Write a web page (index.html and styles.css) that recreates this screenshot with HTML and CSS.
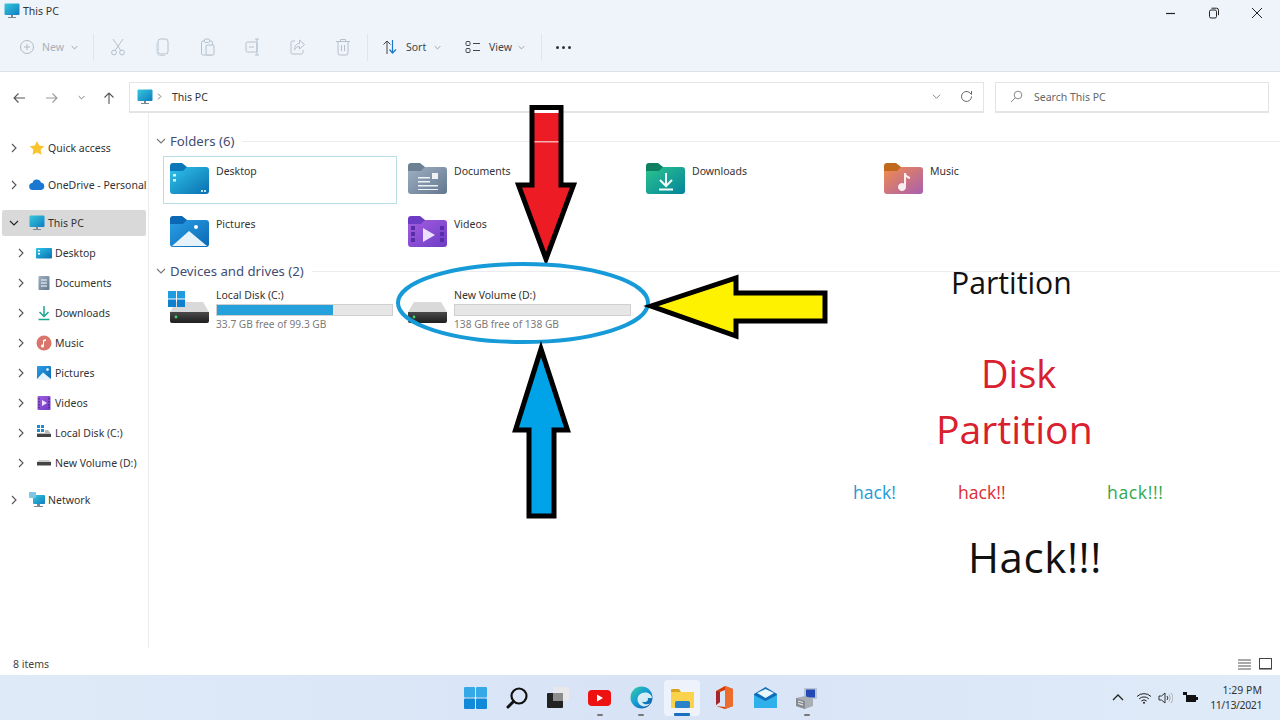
FILE: index.html
```html
<!DOCTYPE html>
<html lang="en">
<head>
  <meta charset="UTF-8" />
  <title>This PC</title>
  <link rel="stylesheet" href="styles.css">
</head>
<body>

<svg class="defs" width="0" height="0">
  <defs>
    <linearGradient id="gBlue" x1="0" y1="0" x2="1" y2="1"><stop offset="0" stop-color="#2fc4ea"/><stop offset="1" stop-color="#0a6fb0"/></linearGradient>
    <linearGradient id="gGrey" x1="0" y1="0" x2="1" y2="1"><stop offset="0" stop-color="#9fb0c2"/><stop offset="1" stop-color="#62778f"/></linearGradient>
    <linearGradient id="gGreen" x1="0" y1="0" x2="1" y2="1"><stop offset="0" stop-color="#2bc48e"/><stop offset="1" stop-color="#04849c"/></linearGradient>
    <linearGradient id="gMusic" x1="0" y1="0" x2="1" y2="1"><stop offset="0" stop-color="#f28c4c"/><stop offset="1" stop-color="#a85fb0"/></linearGradient>
    <linearGradient id="gPic" x1="0" y1="0" x2="1" y2="1"><stop offset="0" stop-color="#2a9fe6"/><stop offset="1" stop-color="#0b68b4"/></linearGradient>
    <linearGradient id="gVid" x1="0" y1="0" x2="1" y2="1"><stop offset="0" stop-color="#a45ee0"/><stop offset="1" stop-color="#6d3cc4"/></linearGradient>
    <linearGradient id="gDrive" x1="0" y1="0" x2="0" y2="1"><stop offset="0" stop-color="#4a4a4a"/><stop offset="1" stop-color="#1e1e1e"/></linearGradient>
    <linearGradient id="gScreen" x1="0" y1="0" x2="1" y2="1"><stop offset="0" stop-color="#35c8dc"/><stop offset="1" stop-color="#0f7cc0"/></linearGradient>
    <linearGradient id="gEdge" x1="0" y1="0" x2="1" y2="1"><stop offset="0" stop-color="#35d0a0"/><stop offset="0.5" stop-color="#1499d8"/><stop offset="1" stop-color="#0a4fa0"/></linearGradient>

    <symbol id="monitor" viewBox="0 0 16 16">
      <rect x="0.5" y="0.5" width="15" height="11.5" rx="1" fill="url(#gScreen)"/>
      <rect x="7" y="12" width="2" height="2" fill="#7a8894"/>
      <rect x="4" y="14" width="8" height="1" fill="#7a8894"/>
    </symbol>
    <symbol id="folderTab" viewBox="0 0 39 31">
      <path d="M0 3a3 3 0 0 1 3-3h9l5 4v6H0z" fill="currentColor"/>
    </symbol>
    <symbol id="drive" viewBox="0 0 39 21">
      <path d="M6 0h27l6 10H0z" fill="#d9d9d9"/>
      <path d="M0 10h39v9a2 2 0 0 1-2 2H2a2 2 0 0 1-2-2z" fill="url(#gDrive)"/>
      <circle cx="6" cy="15" r="1.4" fill="#3fd46a"/>
    </symbol>
    <symbol id="chevR" viewBox="0 0 10 10">
      <path d="M3 1l4 4-4 4" fill="none" stroke="#555" stroke-width="1.1"/>
    </symbol>
    <symbol id="chevD" viewBox="0 0 10 10">
      <path d="M1 3l4 4 4-4" fill="none" stroke="currentColor" stroke-width="1.1"/>
    </symbol>
  </defs>
</svg>

<header class="chrome">
  <div class="titlebar">
    <div class="title-left">
      <svg class="ico16" width="16" height="16"><use href="#monitor"/></svg>
      <span>This PC</span>
    </div>
    <div class="win-btns">
      <svg width="12" height="12" viewBox="0 0 12 12"><path d="M1 6.5h9" stroke="#222" stroke-width="1.2"/></svg>
      <svg width="12" height="12" viewBox="0 0 12 12"><rect x="1.5" y="3" width="7" height="8" rx="1.5" fill="none" stroke="#222"/><path d="M3.5 1.2h5a2 2 0 0 1 2 2v5" fill="none" stroke="#222"/></svg>
      <svg width="12" height="12" viewBox="0 0 12 12"><path d="M1 1l10 10M11 1L1 11" stroke="#222" stroke-width="1"/></svg>
    </div>
  </div>
  <div class="toolbar">
    <div class="tool tool-new dim">
      <svg width="16" height="16" viewBox="0 0 16 16"><circle cx="8" cy="8" r="6.5" fill="none" stroke="#b4bac2"/><path d="M8 5v6M5 8h6" stroke="#b4bac2"/></svg>
      <span>New</span>
      <svg class="chev-s" width="7" height="7"><use href="#chevD"/></svg>
    </div>
    <i class="tool-sep sep-a"></i>
    <div class="tool-icons">
      <svg width="16" height="18" viewBox="0 0 16 18"><path d="M3 1l7.5 11M13 1L5.5 12" fill="none" stroke="#b4c0cc"/><circle cx="4" cy="14.5" r="2.4" fill="none" stroke="#b4c0cc"/><circle cx="12" cy="14.5" r="2.4" fill="none" stroke="#b4c0cc"/></svg>
      <svg width="16" height="18" viewBox="0 0 16 18"><rect x="3" y="1" width="10" height="15" rx="2.5" fill="none" stroke="#b4c0cc"/><path d="M2 5v10a2.500 2.500 0 0 0 2.500 2.500H10" fill="none" stroke="#cdd5dc"/></svg>
      <svg width="16" height="18" viewBox="0 0 16 18"><rect x="1.500" y="3" width="11" height="14" rx="1.500" fill="none" stroke="#b4c0cc"/><rect x="6" y="7" width="8" height="10" rx="1" fill="#eef3fa" stroke="#b4c0cc"/><rect x="4.500" y="1" width="5" height="3.500" rx="1" fill="#eef3fa" stroke="#b4c0cc"/></svg>
      <svg width="16" height="18" viewBox="0 0 16 18"><rect x="1" y="4" width="11" height="10" rx="1.500" fill="none" stroke="#b4c0cc"/><path d="M4 9h5M12 1v16M10 1h4M10 17h4" fill="none" stroke="#b4c0cc"/></svg>
      <svg width="16" height="18" viewBox="0 0 16 18"><path d="M5 3H2.500A1.500 1.500 0 0 0 1 4.500v10A1.500 1.500 0 0 0 2.500 16h9a1.500 1.500 0 0 0 1.500-1.500V12" fill="none" stroke="#b4c0cc"/><path d="M9.500 2l5 4.500-5 4.500V8.500C7 8.500 5.500 10 4.500 12c0-4 2-6.500 5-6.500z" fill="none" stroke="#b4c0cc"/></svg>
      <svg width="16" height="18" viewBox="0 0 16 18"><path d="M1 3.500h14M5.500 3.500V1.500h5v2M3 3.500V15a2 2 0 0 0 2 2h6a2 2 0 0 0 2-2V3.500M6.500 7v6M9.500 7v6" fill="none" stroke="#b4c0cc"/></svg>
    </div>
    <i class="tool-sep sep-b"></i>
    <div class="tool tool-sort">
      <svg width="16" height="16" viewBox="0 0 16 16"><path d="M5 15V2M1.500 5.500L5 2l3.500 3.500" fill="none" stroke="#444"/><path d="M10.500 1v13M7.500 10.500l3 3.500 3.500-3.500" fill="none" stroke="#1a78c8" stroke-width="1.200"/></svg>
      <span>Sort</span>
      <svg class="chev-s" width="7" height="7"><use href="#chevD"/></svg>
    </div>
    <div class="tool tool-view">
      <svg width="16" height="14" viewBox="0 0 16 14"><rect x="1" y="1.500" width="4" height="4" rx="1" fill="none" stroke="#444"/><rect x="1" y="8.500" width="4" height="4" rx="1" fill="none" stroke="#444"/><path d="M8 3.500h7M8 10.500h7" stroke="#444"/></svg>
      <span>View</span>
      <svg class="chev-s" width="7" height="7"><use href="#chevD"/></svg>
    </div>
    <i class="tool-sep sep-c"></i>
    <div class="tool-more"><b></b><b></b><b></b></div>
  </div>
</header>

<div class="addressrow">
  <div class="nav-btns">
    <svg width="14" height="12" viewBox="0 0 14 12"><path d="M13 6H2M6.500 1.500L2 6l4.500 4.500" fill="none" stroke="#555" stroke-width="1.100"/></svg>
    <svg width="14" height="12" viewBox="0 0 14 12"><path d="M1 6h11M7.500 1.500L12 6l-4.500 4.500" fill="none" stroke="#9a9a9a" stroke-width="1.100"/></svg>
    <svg class="nav-down" width="7" height="7"><use href="#chevD"/></svg>
    <svg width="12" height="14" viewBox="0 0 12 14"><path d="M6 13V2M1.500 6.500L6 2l4.500 4.500" fill="none" stroke="#555" stroke-width="1.100"/></svg>
  </div>
  <div class="addressbox">
    <svg width="16" height="16"><use href="#monitor"/></svg>
    <svg class="addr-sep" width="7" height="7"><use href="#chevR"/></svg>
    <span class="addr-text">This PC</span>
    <svg class="addr-drop" width="9" height="9"><use href="#chevD"/></svg>
    <svg class="addr-refresh" width="13" height="13" viewBox="0 0 13 13"><path d="M11.500 6.500a5 5 0 1 1-1.500-3.600L11.500 4.500V1" fill="none" stroke="#666"/></svg>
  </div>
  <div class="searchbox">
    <svg width="13" height="13" viewBox="0 0 13 13"><circle cx="8" cy="5" r="3.800" fill="none" stroke="#888"/><path d="M5.200 7.800L1 12" stroke="#888"/></svg>
    <span>Search This PC</span>
  </div>
</div>

<div class="main">
  <nav class="sidebar">
    <div class="tree-row top r-quick">
      <svg class="tw" width="10" height="10"><use href="#chevR"/></svg>
      <svg width="16" height="16" viewBox="0 0 16 16"><path d="M8 1l2.200 4.600 5 .7-3.600 3.500.9 5L8 12.400 3.500 14.800l.9-5L.8 6.300l5-.7z" fill="#f8c32c"/></svg>
      <span>Quick access</span>
    </div>
    <div class="tree-row top r-one">
      <svg class="tw" width="10" height="10"><use href="#chevR"/></svg>
      <svg width="16" height="16" viewBox="0 0 16 16"><path d="M4 13a3.500 3.500 0 0 1-.6-7A4.500 4.500 0 0 1 12 5.500 3.800 3.800 0 0 1 12.200 13z" fill="#1a78d0"/></svg>
      <span>OneDrive - Personal</span>
    </div>
    <div class="tree-row top selected">
      <svg class="tw tw-open" width="10" height="10"><use href="#chevD"/></svg>
      <svg width="16" height="16"><use href="#monitor"/></svg>
      <span>This PC</span>
    </div>
    <div class="tree-row sub">
      <svg class="tw" width="10" height="10"><use href="#chevR"/></svg>
      <svg width="16" height="16" viewBox="0 0 16 16"><rect y="3" width="16" height="10.500" rx="1" fill="url(#gBlue)"/><rect x="2" y="5" width="2" height="1.500" fill="#fff"/><rect x="2" y="8" width="2" height="1.500" fill="#fff"/></svg>
      <span>Desktop</span>
    </div>
    <div class="tree-row sub">
      <svg class="tw" width="10" height="10"><use href="#chevR"/></svg>
      <svg width="16" height="16" viewBox="0 0 16 16"><rect x="2.500" y="1" width="11" height="14" rx="1" fill="url(#gGrey)"/><path d="M5 5h6M5 8h6M5 11h6" stroke="#fff"/></svg>
      <span>Documents</span>
    </div>
    <div class="tree-row sub">
      <svg class="tw" width="10" height="10"><use href="#chevR"/></svg>
      <svg width="16" height="16" viewBox="0 0 16 16"><path d="M8 1v10M3.500 7L8 11.500 12.500 7M2.500 14.500h11" fill="none" stroke="#1ba88c" stroke-width="1.500"/></svg>
      <span>Downloads</span>
    </div>
    <div class="tree-row sub">
      <svg class="tw" width="10" height="10"><use href="#chevR"/></svg>
      <svg width="16" height="16" viewBox="0 0 16 16"><circle cx="8" cy="8" r="7.500" fill="#d9756a"/><path d="M7 11V5l3-1v2l-2 .6V11a1.500 1.500 0 1 1-1-1.400z" fill="#fff"/></svg>
      <span>Music</span>
    </div>
    <div class="tree-row sub">
      <svg class="tw" width="10" height="10"><use href="#chevR"/></svg>
      <svg width="16" height="16" viewBox="0 0 16 16"><rect x="1" y="1" width="14" height="14" rx="1" fill="url(#gPic)"/><path d="M1 14l6-6.500L15 14v1H1z" fill="#e8f4fc"/><circle cx="11.500" cy="4.500" r="1.300" fill="#fff"/></svg>
      <span>Pictures</span>
    </div>
    <div class="tree-row sub">
      <svg class="tw" width="10" height="10"><use href="#chevR"/></svg>
      <svg width="16" height="16" viewBox="0 0 16 16"><rect x="1.500" y="1" width="13" height="14" rx="1" fill="url(#gVid)"/><path d="M6 5v6l5-3z" fill="#f0e4ff"/><path d="M3 3v1.500M3 6v1.500M3 9v1.500M3 12v1M13 3v1.500M13 6v1.500M13 9v1.500M13 12v1" stroke="#3c1d7c" stroke-width="1.200"/></svg>
      <span>Videos</span>
    </div>
    <div class="tree-row sub">
      <svg class="tw" width="10" height="10"><use href="#chevR"/></svg>
      <svg width="16" height="16" viewBox="0 0 16 16"><rect x="1" y="0" width="3" height="3" fill="#1d8bd0"/><rect x="5" y="0" width="3" height="3" fill="#1d8bd0"/><rect x="1" y="4" width="3" height="3" fill="#1d8bd0"/><rect x="5" y="4" width="3" height="3" fill="#1d8bd0"/><path d="M9 5h3l3 4v3H1V8h8z" fill="#bbb"/><rect x="1" y="9" width="14" height="3" fill="#444"/></svg>
      <span>Local Disk (C:)</span>
    </div>
    <div class="tree-row sub">
      <svg class="tw" width="10" height="10"><use href="#chevR"/></svg>
      <svg width="16" height="16" viewBox="0 0 16 16"><path d="M3 5h10l2 2H1z" fill="#ccc"/><rect x="1" y="7" width="14" height="3.500" fill="#444"/></svg>
      <span>New Volume (D:)</span>
    </div>
    <div class="tree-row top r-net">
      <svg class="tw" width="10" height="10"><use href="#chevR"/></svg>
      <svg width="16" height="16" viewBox="0 0 16 16"><rect x="4" y="3" width="12" height="9" rx="1" fill="url(#gScreen)"/><rect x="0" y="0" width="7" height="6" rx="1" fill="#7fc6e0"/><rect x="8" y="12" width="3" height="2" fill="#7a8894"/><rect x="5" y="14" width="9" height="1" fill="#7a8894"/></svg>
      <span>Network</span>
    </div>
  </nav>

  <section class="content">
    <div class="group-head head-folders">
      <svg width="10" height="10"><use href="#chevD"/></svg>
      <span>Folders (6)</span>
      <i></i>
    </div>
    <div class="tiles">
      <div class="tile focused">
        <svg class="folder" width="39" height="31" viewBox="0 0 39 31" style="color:#0b76b8">
          <use href="#folderTab"/>
          <path d="M0 8h13l4-4h19a3 3 0 0 1 3 3v21a3 3 0 0 1-3 3H3a3 3 0 0 1-3-3z" fill="url(#gBlue)"/>
          <rect x="3" y="11" width="3" height="2.500" fill="#d8f4fb"/><rect x="3" y="16" width="3" height="2.500" fill="#d8f4fb"/>
          <rect x="31" y="27" width="2" height="2" fill="#bfe6f4"/><rect x="34" y="27" width="2" height="2" fill="#bfe6f4"/>
        </svg>
        <span class="tile-name">Desktop</span>
      </div>
      <div class="tile">
        <svg class="folder" width="39" height="31" viewBox="0 0 39 31" style="color:#6d8194">
          <use href="#folderTab"/>
          <path d="M0 8h13l4-4h19a3 3 0 0 1 3 3v21a3 3 0 0 1-3 3H3a3 3 0 0 1-3-3z" fill="url(#gGrey)"/>
          <path d="M10 14h12v1.500H10zM10 18h12v1.500H10zM10 22h20v1.500H10zM10 26h20v1H10z" fill="#eef2f6"/><rect x="24" y="10" width="6" height="6" fill="#eef2f6"/>
        </svg>
        <span class="tile-name">Documents</span>
      </div>
      <div class="tile">
        <svg class="folder" width="39" height="31" viewBox="0 0 39 31" style="color:#0f7f62">
          <use href="#folderTab"/>
          <path d="M0 8h13l4-4h19a3 3 0 0 1 3 3v21a3 3 0 0 1-3 3H3a3 3 0 0 1-3-3z" fill="url(#gGreen)"/>
          <path d="M20 10v12M14 17l6 6 6-6M13 26.500h14" fill="none" stroke="#f2fbf8" stroke-width="2"/>
        </svg>
        <span class="tile-name">Downloads</span>
      </div>
      <div class="tile">
        <svg class="folder" width="39" height="31" viewBox="0 0 39 31" style="color:#c0681c">
          <use href="#folderTab"/>
          <path d="M0 8h13l4-4h19a3 3 0 0 1 3 3v21a3 3 0 0 1-3 3H3a3 3 0 0 1-3-3z" fill="url(#gMusic)"/>
          <path d="M20 10h2c0 3 3 3 4 4v2c-1 0-3-1-4-2v10a4 4 0 1 1-2-3.400z" fill="#fbeef0"/>
        </svg>
        <span class="tile-name">Music</span>
      </div>
      <div class="tile">
        <svg class="folder" width="39" height="31" viewBox="0 0 39 31" style="color:#0b68b4">
          <use href="#folderTab"/>
          <path d="M0 8h13l4-4h19a3 3 0 0 1 3 3v21a3 3 0 0 1-3 3H3a3 3 0 0 1-3-3z" fill="url(#gPic)"/>
          <path d="M2 30l17-15 18 15z" fill="#e6f2fa"/><circle cx="26" cy="11" r="2" fill="#fff"/>
        </svg>
        <span class="tile-name">Pictures</span>
      </div>
      <div class="tile">
        <svg class="folder" width="39" height="31" viewBox="0 0 39 31" style="color:#6d3cc4">
          <use href="#folderTab"/>
          <path d="M0 8h13l4-4h19a3 3 0 0 1 3 3v21a3 3 0 0 1-3 3H3a3 3 0 0 1-3-3z" fill="url(#gVid)"/>
          <path d="M15 12v14l12-7z" fill="#ece0ff"/>
          <path d="M3 10h4v4H3zM3 16h4v4H3zM3 22h4v4H3zM32 10h4v4h-4zM32 16h4v4h-4zM32 22h4v4h-4z" fill="#5a2da8"/>
        </svg>
        <span class="tile-name">Videos</span>
      </div>
    </div>

    <div class="group-head head-drives">
      <svg width="10" height="10"><use href="#chevD"/></svg>
      <span>Devices and drives (2)</span>
      <i></i>
    </div>
    <div class="drives">
      <div class="drive">
        <div class="drive-ico">
          <svg class="win-logo" width="17" height="16" viewBox="0 0 17 16"><rect width="8" height="7.500" fill="#1f9be0"/><rect x="9" width="8" height="7.500" fill="#1f9be0"/><rect y="8.500" width="8" height="7.500" fill="#0f7fd0"/><rect x="9" y="8.500" width="8" height="7.500" fill="#0f7fd0"/></svg>
          <svg width="39" height="21"><use href="#drive"/></svg>
        </div>
        <div class="drive-info">
          <span class="drive-name">Local Disk (C:)</span>
          <div class="bar"><div class="bar-fill" style="width:66%"></div></div>
          <span class="drive-free">33.7 GB free of 99.3 GB</span>
        </div>
      </div>
      <div class="drive">
        <div class="drive-ico">
          <svg width="39" height="21"><use href="#drive"/></svg>
        </div>
        <div class="drive-info">
          <span class="drive-name">New Volume (D:)</span>
          <div class="bar"></div>
          <span class="drive-free">138 GB free of 138 GB</span>
        </div>
      </div>
    </div>
  </section>
</div>

<div class="statusbar">
  <span>8 items</span>
  <div class="status-views">
    <svg width="13" height="11" viewBox="0 0 13 11"><path d="M0 1h13M0 4h13M0 7h13M0 10h13" stroke="#555"/></svg>
    <svg width="13" height="12" viewBox="0 0 13 12"><rect x="0.500" y="0.500" width="12" height="10" fill="none" stroke="#444"/><path d="M0 11.500h13" stroke="#999"/></svg>
  </div>
</div>

<footer class="taskbar">
  <div class="task-icons">
    <div class="task-app">
      <svg width="23" height="22" viewBox="0 0 23 22"><rect width="11" height="10.500" rx="1" fill="#35a8e8"/><rect x="12" width="11" height="10.500" rx="1" fill="#35a8e8"/><rect y="11.500" width="11" height="10.500" rx="1" fill="#1188d8"/><rect x="12" y="11.500" width="11" height="10.500" rx="1" fill="#1188d8"/></svg>
    </div>
    <div class="task-app">
      <svg width="22" height="22" viewBox="0 0 22 22"><circle cx="13" cy="9" r="7.500" fill="none" stroke="#111" stroke-width="2.200"/><path d="M7.500 14.500L2 20" stroke="#111" stroke-width="3" stroke-linecap="round"/></svg>
    </div>
    <div class="task-app">
      <svg width="22" height="21" viewBox="0 0 22 21"><rect x="6" y="0" width="16" height="14" rx="1" fill="#e8e8ea"/><rect y="6" width="16" height="15" rx="1" fill="#222"/><rect x="6" y="6" width="10" height="8" fill="#8d8d8f"/></svg>
    </div>
    <div class="task-app running">
      <svg width="23" height="16" viewBox="0 0 23 16"><rect width="23" height="16" rx="4" fill="#ee1111"/><path d="M9 4.500v7l6-3.500z" fill="#fff"/></svg>
    </div>
    <div class="task-app running">
      <svg width="23" height="23" viewBox="0 0 23 23"><circle cx="11.500" cy="11.500" r="11" fill="url(#gEdge)"/><path d="M22 12c0-3-3-5.500-6.500-5.500-5 0-8 3-8 7 0 3 2 6 6 7 2 .3 5-1 6.500-3-3 1.500-7 1-8-2 2 1 5 .5 5.500-1 1-1 .5-2 0-2.500h4.500z" fill="#eaf6fb" opacity="0.9"/></svg>
    </div>
    <div class="task-app active">
      <svg width="23" height="20" viewBox="0 0 23 20"><path d="M0 2a1 1 0 0 1 1-1h7l2 3h12a1 1 0 0 1 1 1v3H0z" fill="#d9a520"/><path d="M0 4h23v15a1 1 0 0 1-1 1H1a1 1 0 0 1-1-1z" fill="#fbd24c"/><rect x="4" y="13" width="15" height="7" rx="1.500" fill="#2a82c8"/></svg>
    </div>
    <div class="task-app">
      <svg width="19" height="23" viewBox="0 0 19 23"><path d="M11 0l8 3v17l-8 3-9-3 9 1V4L6 6v10l-4 3V5z" fill="#d83b01"/><path d="M11 0l8 3v17l-8 3z" fill="#eb6c2c"/><path d="M2 5l4 1v10l-4 3z" fill="#a4262c"/></svg>
    </div>
    <div class="task-app">
      <svg width="23" height="21" viewBox="0 0 23 21"><path d="M0 7L11.500 0 23 7v14H0z" fill="#0f6cb8"/><path d="M3 6l8.500-4L20 6l-8.500 5z" fill="#e8f6fd"/><path d="M0 8l11.500 6L23 8v13H0z" fill="#2fb0ea"/></svg>
    </div>
    <div class="task-app running">
      <svg width="23" height="22" viewBox="0 0 23 22"><rect x="9" y="1" width="13" height="11" fill="#b8c4d2"/><rect x="11" y="2.500" width="9" height="8" fill="#2448b4"/><path d="M1 11l9-2 8 3v7l-8 3-9-3z" fill="#a8aeb4"/><path d="M1 11l9 3v8l-9-3z" fill="#878c92"/><path d="M3 14l5 1.500M3 16.500l5 1.500" stroke="#eee"/></svg>
    </div>
  </div>
  <div class="tray">
    <svg class="tray-up" width="12" height="7" viewBox="0 0 12 7"><path d="M1 6l5-5 5 5" fill="none" stroke="#222" stroke-width="1.300"/></svg>
    <svg class="tray-wifi" width="16" height="12" viewBox="0 0 16 12"><path d="M1 4.500a10 10 0 0 1 14 0M3.200 6.800a7 7 0 0 1 9.600 0M5.300 9a4 4 0 0 1 5.400 0" fill="none" stroke="#222"/><circle cx="8" cy="10.800" r="1" fill="#222"/></svg>
    <svg class="tray-vol" width="15" height="12" viewBox="0 0 15 12"><path d="M1 4h2.500L7 1v10L3.500 8H1z" fill="none" stroke="#333"/><path d="M9 4a3 3 0 0 1 0 4" fill="none" stroke="#333"/><path d="M11 2.500a6 6 0 0 1 0 7M13 1a8 8 0 0 1 0 10" fill="none" stroke="#aaa"/></svg>
    <svg class="tray-bat" width="15" height="12" viewBox="0 0 15 12"><rect x="3" y="3" width="10" height="7" fill="#111"/><rect x="13" y="5" width="2" height="3" fill="#111"/><rect x="0" y="0" width="4" height="3" fill="#111"/></svg>
    <div class="clock">
      <span>1:29 PM</span>
      <span class="clock-date">11/13/2021</span>
    </div>
  </div>
</footer>

<!-- annotations drawn over the window -->
<svg class="marks" width="1280" height="720" viewBox="0 0 1280 720">
  <path d="M532 107.500H561V185H573.500L546 259 518.500 185H532z" fill="#ed1c24" stroke="#000" stroke-width="5"/>
  <rect x="534.500" y="110" width="24" height="3" fill="#fff"/>
  <rect x="534.500" y="141" width="24" height="1.500" fill="#f4b0b0"/>
  <ellipse cx="523" cy="303" rx="125" ry="39" fill="none" stroke="#169bd8" stroke-width="4"/>
  <path d="M651 306L736 278V293H825V321H736V336z" fill="#fff200" stroke="#000" stroke-width="5"/>
  <path d="M541 349L567.500 430H554V516H529V430H515.500z" fill="#00a2e8" stroke="#000" stroke-width="5"/>
</svg>

<div class="notes">
  <span class="note n-part">Partition</span>
  <span class="note n-disk">Disk</span>
  <span class="note n-part2">Partition</span>
  <span class="note n-h1">hack!</span>
  <span class="note n-h2">hack!!</span>
  <span class="note n-h3">hack!!!</span>
  <span class="note n-hack">Hack!!!</span>
</div>

</body>
</html>
```

FILE: styles.css
```css
* { box-sizing: border-box; }
html, body { margin: 0; padding: 0; }
body {
  width: 1280px;
  height: 720px;
  overflow: hidden;
  position: relative;
  display: flex;
  flex-direction: column;
  background: #fff;
  color: #333;
  font-family: "Noto Sans", "Open Sans", sans-serif;
  font-size: 10.5px;
}
svg { display: block; flex: none; }
.defs { position: absolute; }

/* title + command bar */
.chrome {
  height: 72px;
  background: #eff4fb;
  border-bottom: 1px solid #dde1e6;
}
.titlebar {
  height: 28px;
  display: flex;
  justify-content: space-between;
  align-items: center;
  padding: 0 17px 0 4px;
}
.title-left { display: flex; align-items: center; gap: 3px; margin-top: -6px; }
.win-btns { display: flex; gap: 31px; margin-top: -3px; }
.toolbar {
  height: 38px;
  display: flex;
  align-items: center;
  padding-left: 19px;
}
.tool { display: flex; align-items: center; gap: 6px; color: #444; }
.tool.dim { color: #a9afb6; }
.chev-s { color: #888; }
.tool-new { width: 74px; gap: 7px; }
.tool-sep { width: 1px; height: 27px; background: #e0e5ec; flex: none; }
.tool-icons { display: flex; gap: 29px; margin-left: 16px; width: 257px; }
.tool-sort { margin-left: 14px; width: 83px; gap: 8px; }
.tool-view { width: 76px; }
.tool-view span { margin-left: 2px; }
.tool-more { display: flex; gap: 3px; margin-left: 14px; }
.tool-more b { width: 3px; height: 3px; border-radius: 50%; background: #333; }

/* address row */
.addressrow {
  display: flex;
  align-items: center;
  height: 31px;
  margin-top: 10px;
}
.nav-btns { display: flex; align-items: center; width: 129px; padding-left: 12px; gap: 19px; }
.nav-down { color: #555; margin-right: -1px; }
.addressbox, .searchbox {
  height: 31px;
  display: flex;
  align-items: center;
  background: #fff;
  border: 1px solid #e4e4e4;
  border-bottom-width: 2px;
  padding-bottom: 1px;
}
.addressbox { width: 855px; padding-left: 7px; padding-right: 10px; }
.addr-sep { margin: 0 9px 0 3px; }
.addr-text { flex: 1; color: #333; }
.addr-drop { color: #888; margin-right: 19px; }
.searchbox { width: 274px; margin-left: 11px; padding-left: 14px; gap: 11px; color: #666; }

/* sidebar + content */
.main { flex: 1; display: flex; min-height: 0; }
.sidebar {
  width: 149px;
  border-right: 1px solid #ececec;
  padding-top: 20px;
  flex: none;
}
.tree-row { display: flex; align-items: center; height: 30px; white-space: nowrap; gap: 3px; }
.tree-row.top { padding-left: 9px; }
.tree-row.sub { padding-left: 16px; }
.tree-row .tw { margin-right: 7px; }
.r-one { margin-top: 7px; }
.selected {
  margin: 10px 2px 2px 2px;
  height: 26px;
  background: #d9d9d9;
  border-radius: 2px;
  padding-left: 7px !important;
  color: #333;
}
.tw-open { color: #222; }
.r-net { margin-top: 7px; }

.content { flex: 1; padding: 18px 0 0 14px; min-width: 0; }
.group-head {
  display: flex;
  align-items: center;
  gap: 4px;
  margin-left: -7px;
  height: 20px;
  color: #3f4d74;
  font-size: 13.2px;
}
.group-head svg { color: #777; }
.group-head i { flex: 1; height: 1px; background: #ececec; margin-left: 4px; }
.tiles {
  display: grid;
  grid-template-columns: repeat(4, 234px);
  column-gap: 4px;
  row-gap: 5px;
  margin: 5px 0 0 0;
}
.tile {
  height: 48px;
  display: flex;
  gap: 7px;
  padding: 6px 6px;
  border: 1px solid transparent;
}
.tile.focused { border-color: #b9dbe8; }
.tile-name { line-height: 15px; color: #333; margin-top: 1px; }
.head-drives { margin-top: 4px; }
.drives { display: flex; gap: 4px; margin: 7px 0 0 0; }
.drive { width: 234px; display: flex; gap: 7px; padding-left: 7px; height: 44px; }
.drive-ico {
  width: 39px;
  height: 35px;
  display: flex;
  flex-direction: column;
  justify-content: flex-end;
  position: relative;
  flex: none;
}
.win-logo { position: absolute; left: -2px; top: 3px; }
.drive-info { flex: 1; display: flex; flex-direction: column; padding-right: 4px; }
.drive-name { line-height: 13px; margin-top: 1px; color: #333; }
.bar {
  height: 12px;
  margin-top: 2px;
  background: #e6e6e6;
  border: 1px solid #cfcfcf;
}
.bar-fill { height: 100%; background: #26a0da; }
.drive-free { color: #7a7a7a; line-height: 13px; margin-top: 2px; font-size: 10.2px; }

.statusbar {
  height: 26px;
  display: flex;
  justify-content: space-between;
  align-items: center;
  padding: 6px 8px 0 13px;
  color: #444;
  margin-bottom: 1px;
}
.status-views { display: flex; gap: 8px; align-items: center; }

/* taskbar */
.taskbar {
  height: 45px;
  display: flex;
  align-items: center;
  background: linear-gradient(90deg, #dfeaf8, #d8e4f6 50%, #dfebf8);
  position: relative;
  justify-content: center;
}
.task-icons { display: flex; gap: 5.400px; margin-left: 2px; }
.task-app {
  width: 36px;
  height: 36px;
  display: flex;
  align-items: center;
  justify-content: center;
  position: relative;
  border-radius: 4px;
}
.task-app.running::after, .task-app.active::after {
  content: "";
  position: absolute;
  bottom: 0;
  left: 15px;
  width: 6px;
  height: 2px;
  background: #777;
  border-radius: 1px;
}
.task-app.active { background: #eef3fb; }
.task-app.active::after { left: 10px; width: 16px; height: 3px; background: #1a70c0; }
.tray {
  position: absolute;
  right: 18px;
  top: 0;
  bottom: 0;
  display: flex;
  align-items: center;
}
.tray-wifi { margin-left: 12px; }
.tray-vol { margin-left: 6px; }
.tray-bat { margin-left: 10px; }
.clock {
  display: flex;
  flex-direction: column;
  align-items: flex-end;
  gap: 1px;
  margin-left: 14px;
  width: 50px;
  font-size: 10.5px;
  line-height: 14px;
  color: #333;
  white-space: nowrap;
}
.clock-date { letter-spacing: -0.4px; }

/* annotations on top of everything */
.marks { position: absolute; left: 0; top: 0; pointer-events: none; }
.notes { position: absolute; inset: 0; font-family: "Open Sans", sans-serif; pointer-events: none; }
.note { position: absolute; white-space: nowrap; line-height: 1; color: #111; }
.n-part { left: 951px; top: 268px; font-size: 30.2px; }
.n-disk { left: 981px; top: 354px; font-size: 38px; color: #d9202e; }
.n-part2 { left: 936px; top: 409px; font-size: 39.2px; color: #d9202e; }
.n-h1 { left: 853px; top: 484px; font-size: 17.6px; color: #1f9ad6; }
.n-h2 { left: 958px; top: 484px; font-size: 17.6px; color: #dc2b33; }
.n-h3 { left: 1107px; top: 484px; font-size: 17.6px; letter-spacing: 0.6px; color: #2fa84f; }
.n-hack { left: 968px; top: 536px; font-size: 42px; letter-spacing: 0.6px; color: #111; }
```
